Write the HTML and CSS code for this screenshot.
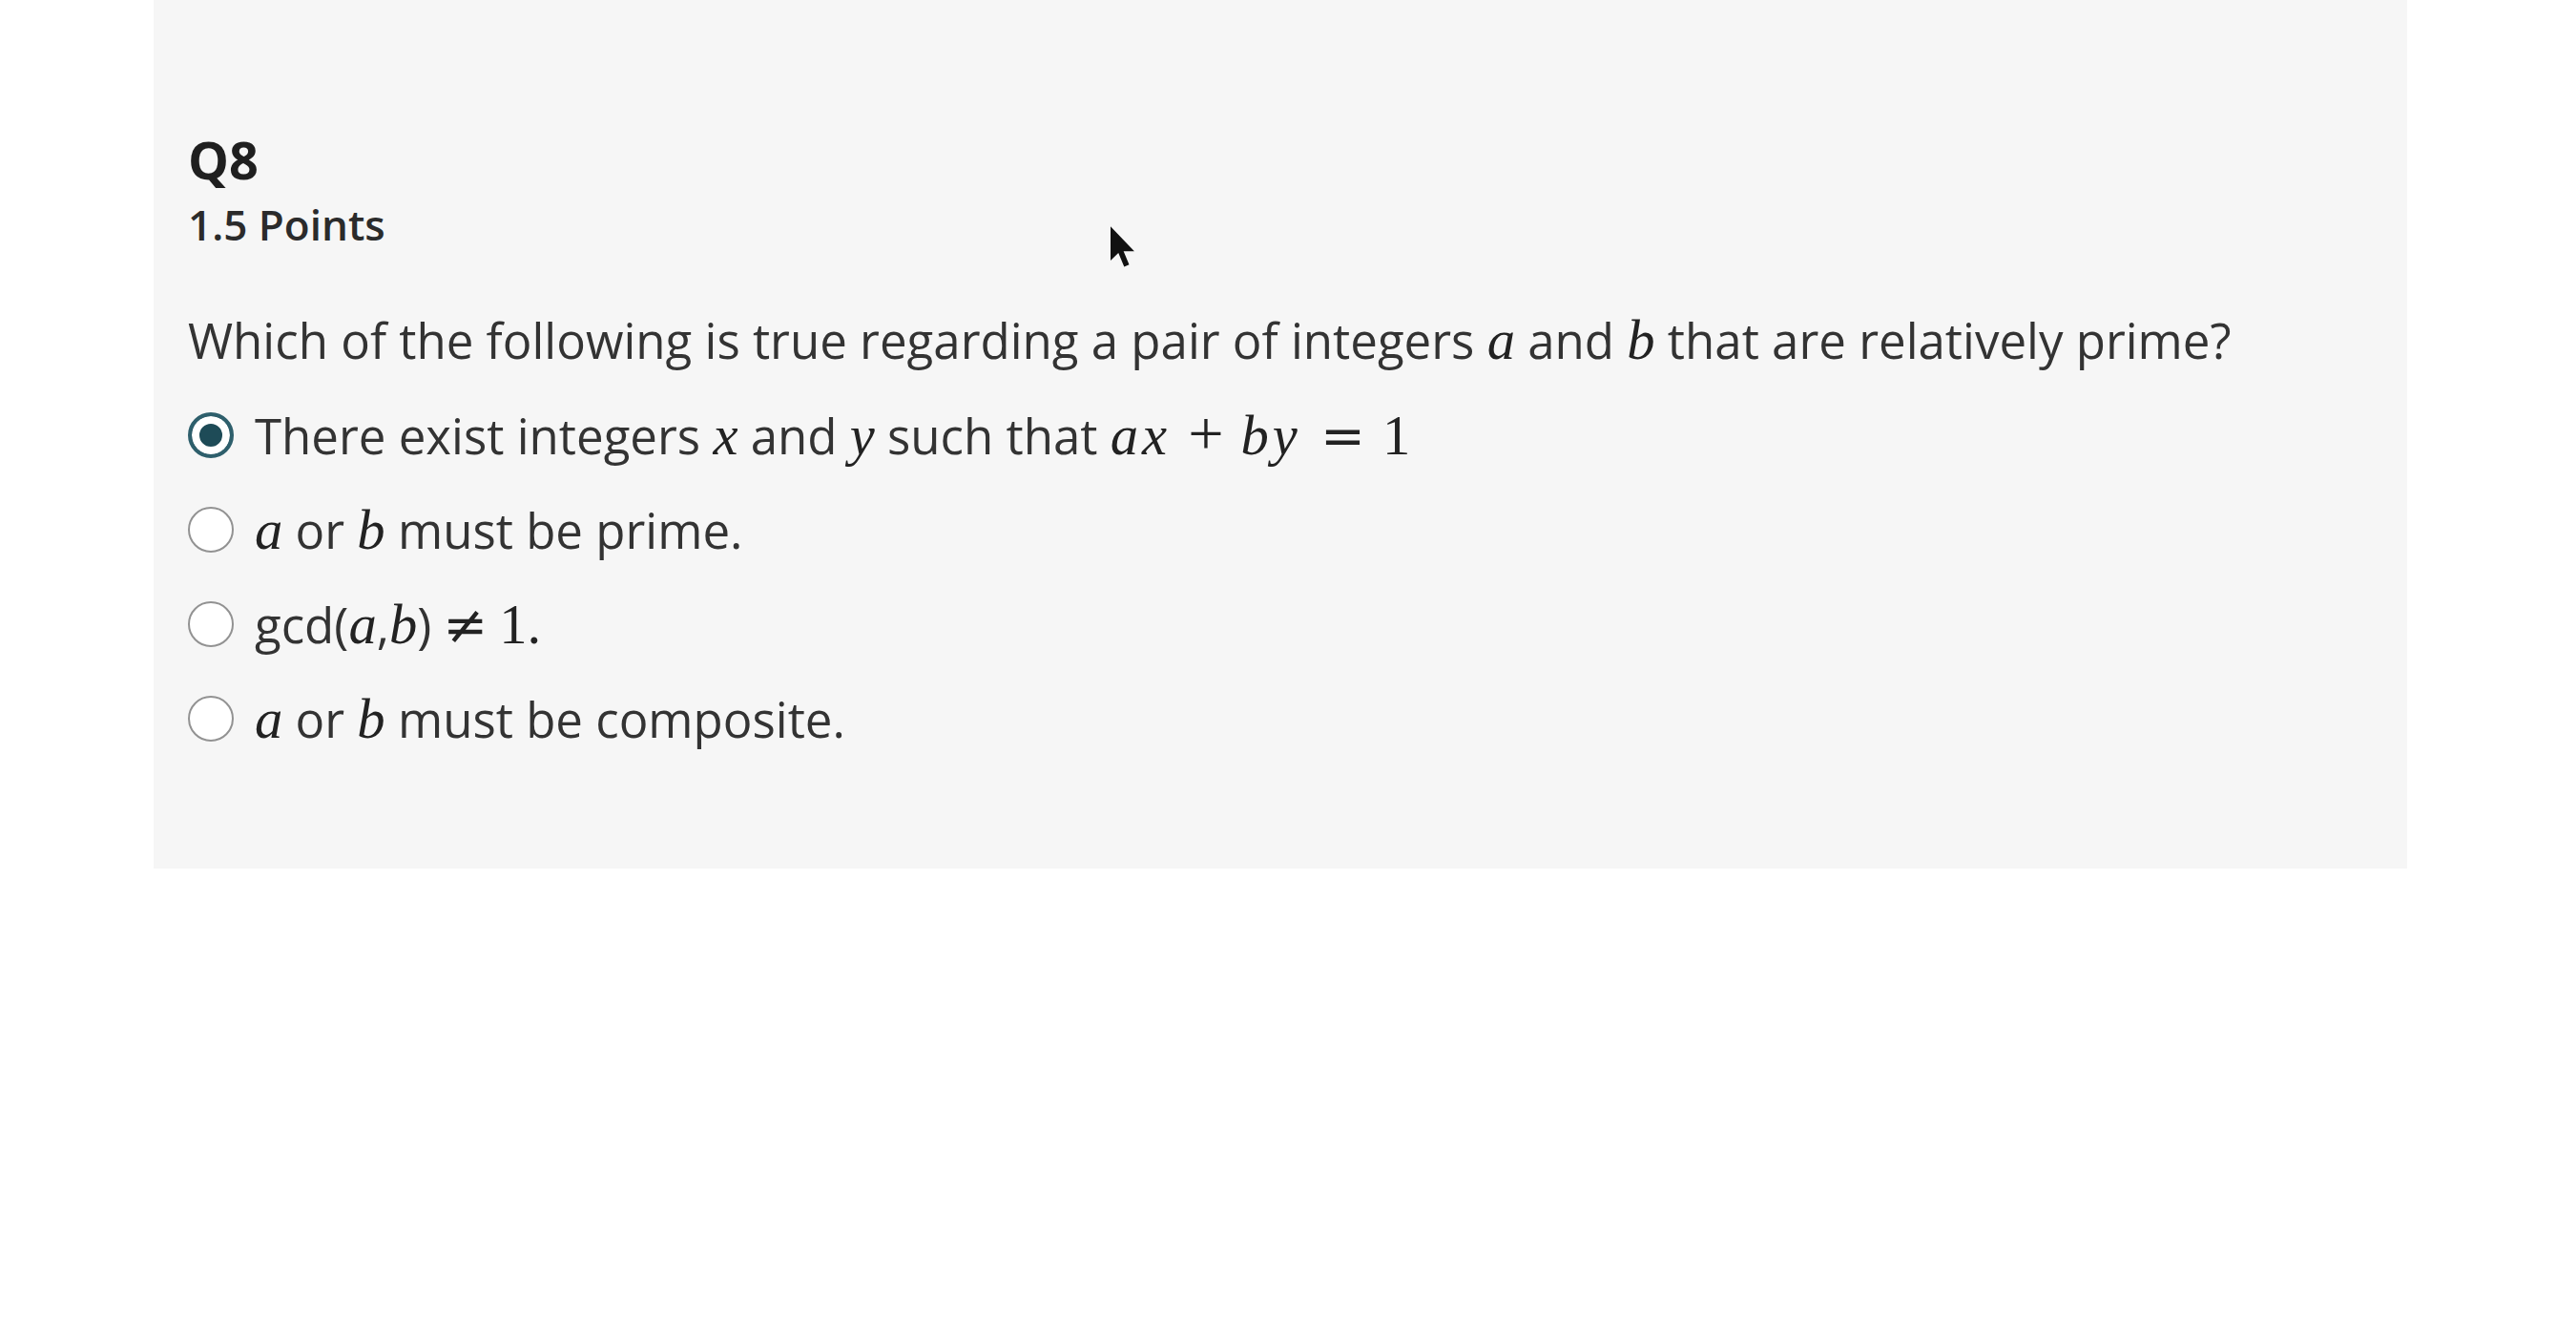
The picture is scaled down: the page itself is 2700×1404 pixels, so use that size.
FILE: index.html
```html
<!DOCTYPE html>
<html lang="en">
<head>
    <meta charset="UTF-8">
    <meta name="viewport" content="width=device-width, initial-scale=1.0">
    <title>Q8</title>
    <link rel="stylesheet" href="styles.css">
</head>
<body>
    <div class="panel">
        <h2 class="q-title">Q8</h2>
        <div class="q-points">1.5 Points</div>
        <p class="q-prompt">Which of the following is true regarding a pair of integers <span class="math">a</span> and <span class="math">b</span> that are relatively prime?</p>
        <ul class="options">
            <li class="option">
                <span class="radio checked"></span>
                <span class="option-text">There exist integers <span class="math">x</span> and <span class="math">y</span> such that <span class="math term">ax</span><span class="op">+</span><span class="math term">by</span><span class="op rel">=</span><span class="num">1</span></span>
            </li>
            <li class="option">
                <span class="radio"></span>
                <span class="option-text"><span class="math">a</span> or <span class="math">b</span> must be prime.</span>
            </li>
            <li class="option">
                <span class="radio"></span>
                <span class="option-text">gcd(<span class="math">a</span>,<span class="math">b</span>)<span class="op rel neq">&ne;</span><span class="num">1.</span></span>
            </li>
            <li class="option">
                <span class="radio"></span>
                <span class="option-text"><span class="math">a</span> or <span class="math">b</span> must be composite.</span>
            </li>
        </ul>
    </div>

    <!-- mouse pointer from the capture -->
    <svg class="cursor" width="26" height="46" viewBox="0 0 12 21">
        <path d="M0 0 L0 16.5 L3.8 12.8 L6.6 19.5 L9 18.5 L6.3 12 L11.5 12 Z" fill="#111"/>
    </svg>
</body>
</html>
```

FILE: styles.css
```css
body {
    margin: 0;
    padding: 0;
    background-color: #fff;
    font-family: "Open Sans", "Noto Sans", sans-serif;
    color: #333;
}
.panel {
    width: 2362px;
    margin-left: 161px;
    padding: 135px 0 122px 36px;
    box-sizing: border-box;
    background-color: #f6f6f6;
}
.q-title {
    margin: 0;
    font-size: 54px;
    line-height: 64px;
    font-weight: 700;
    color: #1f1f1f;
}
.q-points {
    margin-top: 8px;
    font-size: 44px;
    line-height: 56px;
    font-weight: 600;
    color: #2b2b2b;
}
.q-prompt {
    margin: 58px 0 0 0;
    font-size: 51px;
    line-height: 70px;
}
.options {
    list-style: none;
    margin: 30px 0 0 0;
    padding: 0;
    display: flex;
    flex-direction: column;
    gap: 29px;
}
.option {
    display: flex;
    align-items: center;
    gap: 22px;
    font-size: 51px;
    line-height: 70px;
}
.radio {
    flex: none;
    width: 48px;
    height: 48px;
    border-radius: 50%;
    border: 2.5px solid #929292;
    background-color: #fff;
    box-sizing: border-box;
}
.radio.checked {
    border: 4px solid #2e5f6c;
    background-color: #1e4b57;
    box-shadow: inset 0 0 0 8px #fff;
}
.math {
    font-family: "Liberation Serif", "DejaVu Serif", serif;
    font-style: italic;
    font-size: 1.15em;
    line-height: 1;
    color: #222;
}
.math.term {
    letter-spacing: 4px;
}
.num {
    font-family: "Liberation Serif", "DejaVu Serif", serif;
    font-size: 1.15em;
    line-height: 1;
    color: #222;
}
.op {
    font-family: "Liberation Serif", "DejaVu Serif", serif;
    font-size: 1.3em;
    line-height: 1;
    color: #222;
    margin: 0 18px;
}
.op.rel {
    font-family: "DejaVu Serif", "Liberation Serif", serif;
    font-size: 1.1em;
    margin: 0 18px 0 20px;
}
.op.neq {
    margin: 0 12px 0 12px;
}
.cursor {
    position: absolute;
    left: 1164px;
    top: 237px;
}
```
